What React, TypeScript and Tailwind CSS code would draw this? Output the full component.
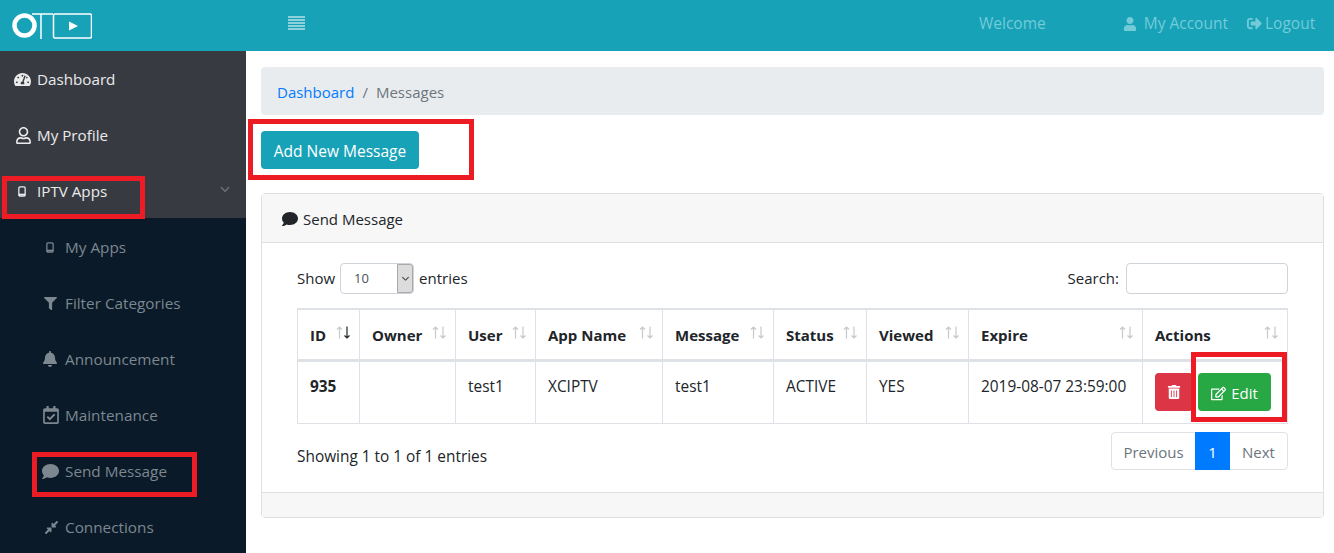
import {
  FaBell,
  FaComment,
  FaCompressAlt,
  FaFilter,
  FaRegCalendarCheck,
  FaRegEdit,
  FaRegUser,
  FaSignOutAlt,
  FaTachometerAlt,
  FaTrashAlt,
  FaUser,
} from "react-icons/fa";
import { FaAngleDown } from "react-icons/fa6";
import { ReactNode } from "react";

function MobileIcon({ className }: { className?: string }) {
  return (
    <svg viewBox="0 0 10 14" className={className} fill="none" stroke="currentColor">
      <rect x="1" y="1" width="8" height="12" rx="1.4" strokeWidth="1.6" />
      <path d="M1 11h8" strokeWidth="2.4" />
    </svg>
  );
}

function SortArrows({ active }: { active?: boolean }) {
  return (
    <svg
      width="15"
      height="13"
      viewBox="0 0 15 13"
      fill="none"
      className="absolute top-[16px] right-[8px]"
      strokeWidth="1.2"
    >
      <path d="M3.5 12.5V1M1 3.5l2.5-2.5L6 3.5" stroke="#c6c8ca" />
      <path d="M11 0.5V12M8.5 9.5l2.5 2.5 2.5-2.5" stroke={active ? "#212529" : "#c6c8ca"} />
    </svg>
  );
}

function SideItem({ icon, label }: { icon: ReactNode; label: string }) {
  return (
    <div className="h-14 flex items-center pl-[14px] text-white/90 text-[15.2px]">
      <span className="w-[23px] flex justify-start">{icon}</span>
      <span className="pt-px">{label}</span>
    </div>
  );
}

function SubItem({ icon, label }: { icon: ReactNode; label: string }) {
  return (
    <div className="h-[56.1px] shrink-0 flex items-center pl-[42px] text-[#7d8790] text-[15.3px]">
      <span className="w-[23px] flex justify-start">{icon}</span>
      {label}
    </div>
  );
}

function Th({ label, width, active }: { label: string; width: string; active?: boolean }) {
  return (
    <th className={`relative border border-[#dee2e6] border-b-[3px] pl-3 pt-[2px] text-left font-bold ${width}`}>
      {label}
      <SortArrows active={active} />
    </th>
  );
}

function Td({ children, bold }: { children?: ReactNode; bold?: boolean }) {
  return (
    <td className={`border border-[#dee2e6] pl-3 align-top pt-[13px] text-[15.4px] ${bold ? "font-bold" : ""}`}>
      {children}
    </td>
  );
}

function MenuLines() {
  return (
    <div className="ml-[42px] mb-[5px] w-[17px] flex flex-col gap-[1px] opacity-70">
      <div className="h-[2px] bg-[#bfe6ec]" />
      <div className="h-[2px] bg-[#bfe6ec]" />
      <div className="h-[2px] bg-[#bfe6ec]" />
      <div className="h-[2px] bg-[#bfe6ec]" />
      <div className="h-[2px] bg-[#bfe6ec]" />
    </div>
  );
}

export default function App() {
  return (
    <div className="relative w-[1334px] h-[553px] overflow-hidden bg-white text-[15px] text-[#212529] font-['Open_Sans',sans-serif]">
      <header className="h-[51px] bg-[#17a2b8] flex items-center text-[#74cbd8]">
        <div className="w-[246px] pl-3 shrink-0">
          <svg width="80" height="28" viewBox="0 0 80 28" fill="none" stroke="white" className="block">
            <circle cx="12.5" cy="13.5" r="10" strokeWidth="4.5" />
            <path d="M29 2v25" strokeWidth="1.5" />
            <path d="M20 2h21" strokeWidth="1.5" />
            <rect x="41.5" y="2" width="38" height="24" rx="1.5" strokeWidth="1.5" />
            <path d="M57 9.5l9 4.5-9 4.5z" fill="white" stroke="none" />
          </svg>
        </div>
        <MenuLines />
        <div className="flex items-center mb-[4px] text-[15.5px]">
          <span className="ml-[674px]">Welcome</span>
          <FaUser className="ml-[77px] mr-[7px] text-[14px]" />
          <span>My Account</span>
          <FaSignOutAlt className="ml-[19px] mr-[3px] text-[15px]" />
          <span>Logout</span>
        </div>
      </header>

      <div className="flex h-[502px]">
        <aside className="w-[246px] shrink-0 flex flex-col overflow-hidden bg-[#0a1a28]">
          <div className="h-[167px] shrink-0 bg-[#373a41]">
            <SideItem icon={<FaTachometerAlt className="text-[17px]" />} label="Dashboard" />
            <SideItem icon={<FaRegUser className="text-[17px] ml-[1px]" />} label="My Profile" />
            <div className="relative">
              <SideItem icon={<MobileIcon className="ml-[4px] w-[8px] h-[11px]" />} label="IPTV Apps" />
              <FaAngleDown className="absolute right-[15px] top-[20px] text-[12px] text-[#6c7177]" />
            </div>
          </div>
          <div className="pt-px">
            <SubItem icon={<MobileIcon className="ml-[4px] w-[8px] h-[11px]" />} label="My Apps" />
            <SubItem icon={<FaFilter className="ml-[2px] text-[13px]" />} label="Filter Categories" />
            <SubItem icon={<FaBell className="text-[16px]" />} label="Announcement" />
            <SubItem icon={<FaRegCalendarCheck className="text-[18px]" />} label="Maintenance" />
            <SubItem icon={<FaComment className="text-[17px]" />} label="Send Message" />
            <SubItem icon={<FaCompressAlt className="ml-[2px] text-[15px]" />} label="Connections" />
          </div>
        </aside>

        <main className="flex-1 pt-4 pl-[15px] pr-[10px]">
          <nav className="h-12 bg-[#e9ecef] rounded flex items-center px-4 pt-[2px]">
            <span className="text-[#007bff]">Dashboard</span>
            <span className="px-2 text-[#6c757d]">/</span>
            <span className="text-[#6c757d]">Messages</span>
          </nav>
          <button className="mt-4 h-[38px] w-[158px] rounded bg-[#17a2b8] text-white text-[15.5px] pt-[4px]">
            Add New Message
          </button>

          <section className="mt-6 h-[325px] border border-[#dfdfdf] rounded flex flex-col">
            <div className="h-[49px] bg-[#f7f7f7] border-b border-[#dfdfdf] flex items-center pl-5 gap-[5px] pt-[2px]">
              <FaComment className="text-[16px] text-[#212529]" />
              Send Message
            </div>
            <div className="flex-1 px-[35px] pt-5">
              <div className="flex items-center justify-between h-[31px]">
                <div className="flex items-center">
                  Show
                  <div className="mx-[5px] w-[74px] h-[31px] border border-[#ced4da] rounded flex items-center justify-between pl-[13px] pr-0 text-[13px] text-[#495057]">
                    10
                    <span className="w-4 h-[29px] bg-[#dcdcdc] border border-[#a9a9a9] rounded-r-[3px] flex items-center justify-center">
                      <FaAngleDown className="text-[9px] text-[#444]" />
                    </span>
                  </div>
                  entries
                </div>
                <div className="flex items-center gap-[7px]">
                  Search:
                  <div className="w-[162px] h-[31px] border border-[#ced4da] rounded" />
                </div>
              </div>

              <table className="mt-[14px] w-[990px] table-fixed border-collapse">
                <thead>
                  <tr className="h-[51px] border-t-2 border-[#dee2e6]">
                    <Th label="ID" width="w-[62px]" active />
                    <Th label="Owner" width="w-[96px]" />
                    <Th label="User" width="w-[80px]" />
                    <Th label="App Name" width="w-[127px]" />
                    <Th label="Message" width="w-[111px]" />
                    <Th label="Status" width="w-[93px]" />
                    <Th label="Viewed" width="w-[102px]" />
                    <Th label="Expire" width="w-[174px]" />
                    <Th label="Actions" width="w-[145px]" />
                  </tr>
                </thead>
                <tbody>
                  <tr className="h-[63px]">
                    <Td bold>935</Td>
                    <Td />
                    <Td>test1</Td>
                    <Td>XCIPTV</Td>
                    <Td>test1</Td>
                    <Td>ACTIVE</Td>
                    <Td>YES</Td>
                    <Td>2019-08-07 23:59:00</Td>
                    <td className="border border-[#dee2e6] pl-3">
                      <div className="flex gap-[5px]">
                        <span className="w-[38px] h-[38px] rounded bg-[#dc3545] flex items-center justify-center text-white">
                          <FaTrashAlt className="text-[14px]" />
                        </span>
                        <span className="w-[73px] h-[38px] rounded bg-[#28a745] flex items-center justify-center gap-[5px] pt-[2px] text-white">
                          <FaRegEdit className="text-[15px]" />
                          Edit
                        </span>
                      </div>
                    </td>
                  </tr>
                </tbody>
              </table>

              <div className="flex items-start justify-between mt-2">
                <span className="mt-[13px] text-[15.4px]">Showing 1 to 1 of 1 entries</span>
                <div className="flex h-[38px] items-stretch border border-[#dee2e6] rounded text-[#6c757d]">
                  <span className="w-[83px] pt-[3px] flex items-center justify-center">Previous</span>
                  <span className="w-[35px] -my-px pt-[3px] flex items-center justify-center bg-[#007bff] text-white">1</span>
                  <span className="w-[57px] pt-[3px] flex items-center justify-center">Next</span>
                </div>
              </div>
            </div>
            <div className="h-[25px] bg-[#f7f7f7] border-t border-[#dfdfdf]" />
          </section>
        </main>
      </div>

      {/* red marks drawn over the screenshot */}
      <div className="absolute left-[2px] top-[176px] w-[143px] h-[43px] border-[5px] border-[#ed1c24]" />
      <div className="absolute left-[248px] top-[119px] w-[226px] h-[61px] border-[5px] border-[#ed1c24]" />
      <div className="absolute left-[32px] top-[452px] w-[165px] h-[45px] border-[5px] border-[#ed1c24]" />
      <div className="absolute left-[1191px] top-[352px] w-[96px] h-[70px] border-[5px] border-[#ed1c24]" />
    </div>
  );
}
